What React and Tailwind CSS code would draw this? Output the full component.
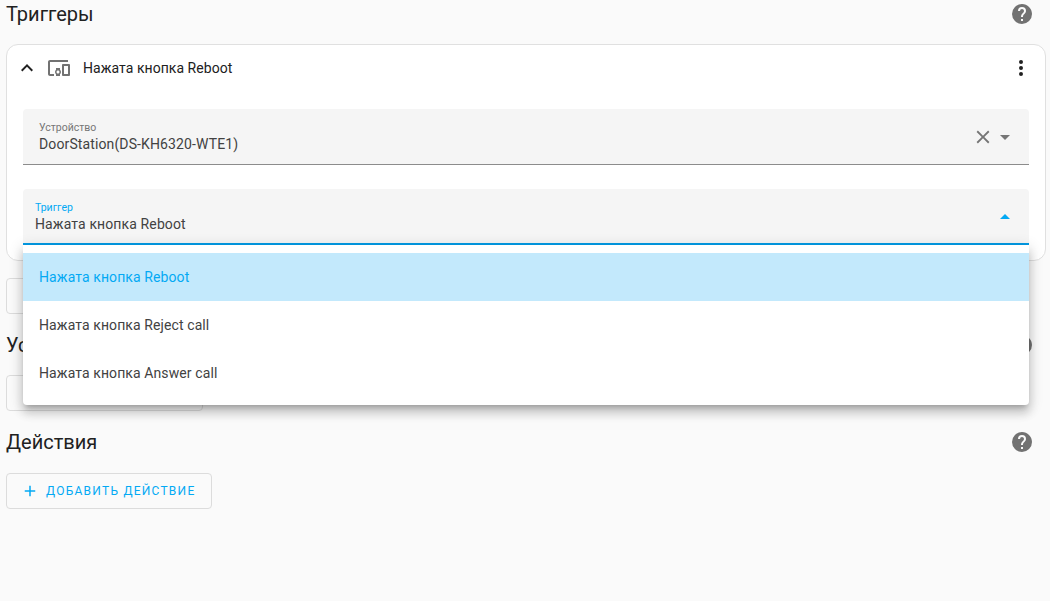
const P = {
  help: "M15.07,11.25L14.17,12.17C13.45,12.89 13,13.5 13,15H11V14.5C11,13.39 11.45,12.39 12.17,11.67L13.41,10.41C13.78,10.05 14,9.55 14,9C14,7.89 13.1,7 12,7A2,2 0 0,0 10,9H8A4,4 0 0,1 12,5A4,4 0 0,1 16,9C16,9.88 15.64,10.67 15.07,11.25M13,19H11V17H13M12,2A10,10 0 0,0 2,12A10,10 0 0,0 12,22A10,10 0 0,0 22,12C22,6.47 17.5,2 12,2Z",
  devices: "M3 6H21V4H3C1.9 4 1 4.9 1 6V18C1 19.1 1.9 20 3 20H7V18H3V6M13 12H9V13.78C8.39 14.33 8 15.11 8 16C8 16.89 8.39 17.67 9 18.22V20H13V18.22C13.61 17.67 14 16.88 14 16S13.61 14.33 13 13.78V12M11 17.5C10.17 17.5 9.5 16.83 9.5 16S10.17 14.5 11 14.5 12.5 15.17 12.5 16 11.83 17.5 11 17.5M22 8H16C15.5 8 15 8.5 15 9V19C15 19.5 15.5 20 16 20H22C22.5 20 23 19.5 23 19V9C23 8.5 22.5 8 22 8M21 18H17V10H21V18Z",
  chevronUp: "M7.41,15.41L12,10.83L16.59,15.41L18,14L12,8L6,14L7.41,15.41Z",
  dots: "M12,16A2,2 0 0,1 14,18A2,2 0 0,1 12,20A2,2 0 0,1 10,18A2,2 0 0,1 12,16M12,10A2,2 0 0,1 14,12A2,2 0 0,1 12,14A2,2 0 0,1 10,12A2,2 0 0,1 12,10M12,4A2,2 0 0,1 14,6A2,2 0 0,1 12,8A2,2 0 0,1 10,6A2,2 0 0,1 12,4Z",
  close: "M19,6.41L17.59,5L12,10.59L6.41,5L5,6.41L10.59,12L5,17.59L6.41,19L12,13.41L17.59,19L19,17.59L13.41,12L19,6.41Z",
  menuDown: "M7,10L12,15L17,10H7Z",
  menuUp: "M7,15L12,10L17,15H7Z",
  plus: "M19,13H13V19H11V13H5V11H11V5H13V11H19V13Z",
};

function Icon({ d, className }) {
  return (
    <svg viewBox="0 0 24 24" className={className} fill="currentColor">
      <path d={d} />
    </svg>
  );
}

function Heading({ children }) {
  return (
    <div className="flex h-7 items-center justify-between pl-[6px] pr-4">
      <h2 className="text-[20px] leading-7 font-normal text-[#212121]">{children}</h2>
      <Icon d={P.help} className="h-6 w-6 text-[#727272]" />
    </div>
  );
}

function AddButton({ children, width }) {
  return (
    <div className="pl-[6px]">
      <button className={`flex h-9 items-center rounded border border-[#dcdcdc] pl-4 text-[12px] font-normal tracking-[1.25px] text-[#03a9f4] ${width}`}>
        <Icon d={P.plus} className="mr-[7px] h-[18px] w-[18px] -ml-[2px]" />
        {children}
      </button>
    </div>
  );
}

function MenuItem({ children, active }) {
  return (
    <div className={`flex h-12 items-center pl-4 text-[14px] tracking-[0.1px] ${active ? "bg-[#c3e9fc] text-[#03a9f4]" : "text-[#424242]"}`}>
      {children}
    </div>
  );
}

export default function App() {
  return (
    <div className="h-[601px] w-[1050px] overflow-hidden bg-[#fafafa] font-['Roboto',sans-serif]">
      <Heading>Триггеры</Heading>

      <div className="mx-[6px] mb-[17px] mt-4 h-[217px] w-[1040px] rounded-xl border border-[#e0e0e0] bg-white">
        <div className="flex h-[46px] items-center pl-2 pr-[12px]">
          <Icon d={P.chevronUp} className="h-6 w-6 text-[#212121]" />
          <Icon d={P.devices} className="ml-2 h-6 w-6 text-[#727272]" />
          <span className="ml-3 flex-1 text-[14px] font-normal tracking-[0.05px] text-[#212121]">Нажата кнопка Reboot</span>
          <Icon d={P.dots} className="h-6 w-6 text-[#212121]" />
        </div>

        <div className="mt-[18px] px-4">
          <div className="relative flex h-[56px] w-[1006px] items-center rounded-t border-b border-[#8c8c8c] bg-[#f5f5f5] pl-4 pr-[12px]">
            <div className="flex-1 pt-[1px]">
              <div className="translate-y-[1px] text-[10.5px] leading-[14px] text-[#757575]">Устройство</div>
              <div className="text-[14px] leading-[20px] tracking-[0.12px] text-[#424242]">DoorStation(DS-KH6320-WTE1)</div>
            </div>
            <Icon d={P.close} className="mr-[-1px] h-[22px] w-[22px] text-[#757575]" />
            <Icon d={P.menuDown} className="h-6 w-6 text-[#757575]" />
          </div>

          <div className="relative z-10 mt-6 w-[1006px]">
            <div className="flex h-[56px] items-center rounded-t border-b-2 border-[#039be5] bg-[#f5f5f5] pl-3 pr-[12px]">
              <div className="flex-1 pt-[1px]">
                <div className="translate-y-[1px] text-[10.5px] leading-[14px] text-[#03a9f4]">Триггер</div>
                <div className="text-[14px] leading-[20px] tracking-[0.12px] text-[#424242]">Нажата кнопка Reboot</div>
              </div>
              <Icon d={P.menuUp} className="h-6 w-6 text-[#03a9f4]" />
            </div>
            <div className="absolute left-0 top-full w-full rounded-b bg-white py-2 shadow-[0_5px_5px_-3px_rgba(0,0,0,0.2),0_8px_10px_1px_rgba(0,0,0,0.14),0_3px_14px_2px_rgba(0,0,0,0.12)]">
              <MenuItem active>Нажата кнопка Reboot</MenuItem>
              <MenuItem>Нажата кнопка Reject call</MenuItem>
              <MenuItem>Нажата кнопка Answer call</MenuItem>
            </div>
          </div>
        </div>
      </div>

      <AddButton width="w-[197px]">ДОБАВИТЬ ТРИГГЕР</AddButton>

      <div className="mt-[17px]">
        <Heading>Условия</Heading>
      </div>
      <div className="mt-4">
        <AddButton width="w-[197px]">ДОБАВИТЬ УСЛОВИЕ</AddButton>
      </div>

      <div className="mt-[17px]">
        <Heading>Действия</Heading>
      </div>
      <div className="mt-[17px]">
        <AddButton width="w-[206px]">ДОБАВИТЬ ДЕЙСТВИЕ</AddButton>
      </div>
    </div>
  );
}
